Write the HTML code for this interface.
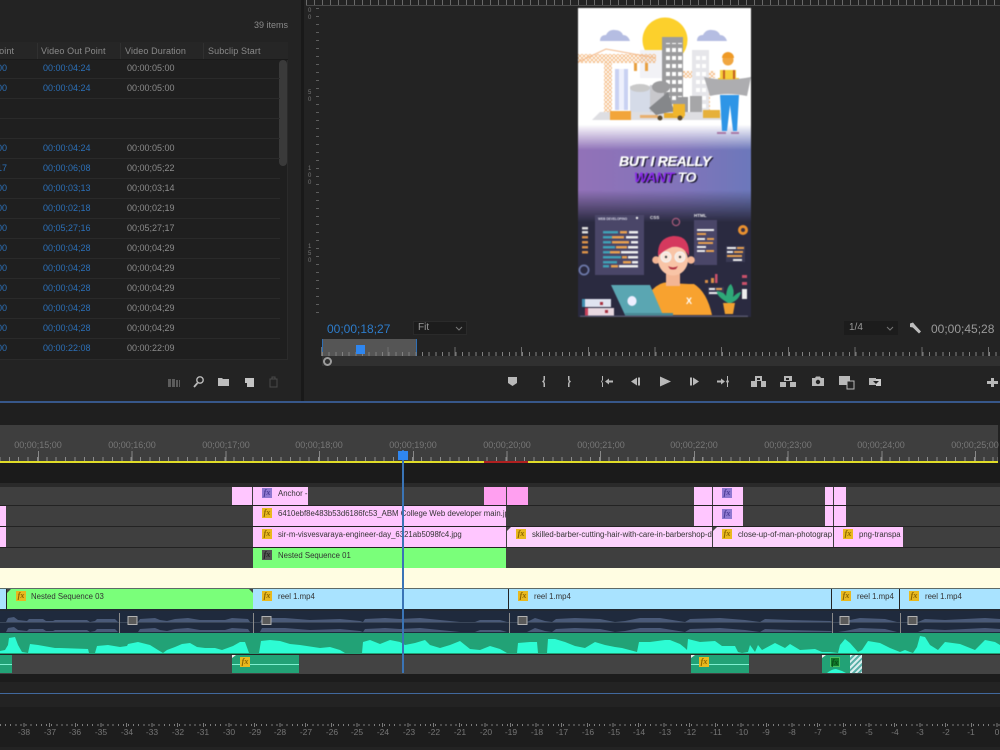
<!DOCTYPE html>
<html><head><meta charset="utf-8"><style>
html,body{margin:0;padding:0;background:#232323}
#r{position:relative;width:1000px;height:750px;overflow:hidden;background:#232323;font-family:"Liberation Sans",sans-serif;font-size:9px;filter:blur(.35px)}
#r div,#r span.a,#r svg{position:absolute}
.t{white-space:nowrap}
.rw{left:0;width:280px;height:20px;border-bottom:1px solid #2a2a2a;box-sizing:border-box}
.o{left:43px;color:#2c70b8;white-space:nowrap}
.d{left:127px;color:#8b8b8b;white-space:nowrap}
.i{left:-3px;color:#2c70b8;white-space:nowrap}
.h{color:#8a8a8a;top:46px;white-space:nowrap;letter-spacing:.12px}
.c{height:20px;color:#333;white-space:nowrap;overflow:hidden;line-height:15px}
.p{background:#ffc6ff}.q{background:#ff9ff0}.l{background:#fdd2fd}.g{background:#7aff7a}.b{background:#a9e3ff}
.f{width:10px;height:10px;top:2px;left:9px;background:#e9b91e;color:#8a6400;font:italic bold 8px/10px "Liberation Serif",serif;text-align:center}
.f.u{background:#8f78d0;color:#4c3c96}.f.k{background:#555;color:#222}
.n{left:25px;top:0;font-size:7.8px}
.rl{top:440px;width:60px;text-align:center;color:#777;font-size:9px}
.bl{top:727px;width:20px;text-align:center;color:#767676;font-size:8.5px}
.gn{background:#22a276;height:18px;top:655px}
</style></head><body><div id="r">

<!-- project panel -->
<div class="t" style="left:254px;top:20px;color:#8a8a8a">39 items</div>
<div style="left:0;top:42px;width:288px;height:318px;background:#1f1f1f;border:1px solid #2b2b2b;border-left:0;box-sizing:border-box"></div>
<div style="left:0;top:42px;width:288px;height:17px;background:#262626;border-bottom:1px solid #1a1a1a"></div>
<div style="left:37px;top:43px;width:1px;height:16px;background:#303030"></div>
<div style="left:120px;top:43px;width:1px;height:16px;background:#303030"></div>
<div style="left:203px;top:43px;width:1px;height:16px;background:#303030"></div>
<div class="h" style="left:-7px">Point</div>
<div class="h" style="left:41px">Video Out Point</div>
<div class="h" style="left:125px">Video Duration</div>
<div class="h" style="left:208px">Subclip Start</div>
<div style="left:279px;top:60px;width:8px;height:106px;background:#3a3a3a;border-radius:4px"></div>

<div class="rw" style="top:59px"></div><div class="rw" style="top:79px"></div><div class="rw" style="top:99px"></div><div class="rw" style="top:119px"></div><div class="rw" style="top:139px"></div><div class="rw" style="top:159px"></div><div class="rw" style="top:179px"></div><div class="rw" style="top:199px"></div><div class="rw" style="top:219px"></div><div class="rw" style="top:239px"></div><div class="rw" style="top:259px"></div><div class="rw" style="top:279px"></div><div class="rw" style="top:299px"></div><div class="rw" style="top:319px"></div>

<div class="i" style="top:63px">00</div><div class="o" style="top:63px">00:00:04:24</div><div class="d" style="top:63px">00:00:05:00</div>
<div class="i" style="top:83px">00</div><div class="o" style="top:83px">00:00:04:24</div><div class="d" style="top:83px">00:00:05:00</div>
<div class="i" style="top:143px">00</div><div class="o" style="top:143px">00:00:04:24</div><div class="d" style="top:143px">00:00:05:00</div>
<div class="i" style="top:163px">17</div><div class="o" style="top:163px">00;00;06;08</div><div class="d" style="top:163px">00;00;05;22</div>
<div class="i" style="top:183px">00</div><div class="o" style="top:183px">00;00;03;13</div><div class="d" style="top:183px">00;00;03;14</div>
<div class="i" style="top:203px">00</div><div class="o" style="top:203px">00;00;02;18</div><div class="d" style="top:203px">00;00;02;19</div>
<div class="i" style="top:223px">00</div><div class="o" style="top:223px">00;05;27;16</div><div class="d" style="top:223px">00;05;27;17</div>
<div class="i" style="top:243px">00</div><div class="o" style="top:243px">00;00;04;28</div><div class="d" style="top:243px">00;00;04;29</div>
<div class="i" style="top:263px">00</div><div class="o" style="top:263px">00;00;04;28</div><div class="d" style="top:263px">00;00;04;29</div>
<div class="i" style="top:283px">00</div><div class="o" style="top:283px">00;00;04;28</div><div class="d" style="top:283px">00;00;04;29</div>
<div class="i" style="top:303px">00</div><div class="o" style="top:303px">00;00;04;28</div><div class="d" style="top:303px">00;00;04;29</div>
<div class="i" style="top:323px">00</div><div class="o" style="top:323px">00;00;04;28</div><div class="d" style="top:323px">00;00;04;29</div>
<div style="left:0;top:340px;width:280px;height:12px;overflow:hidden"><div class="i" style="top:3px">00</div><div class="o" style="top:3px">00:00:22:08</div><div class="d" style="top:3px">00:00:22:09</div></div>

<svg style="left:160px;top:372px" width="125" height="20" viewBox="160 372 125 20">
<g fill="#5c5c5c"><rect x="168" y="379" width="3" height="8"/><rect x="172" y="379" width="3" height="8"/><rect x="176" y="380" width="2" height="7"/><rect x="179" y="380" width="1" height="7"/></g>
<circle cx="200" cy="380" r="3.2" fill="none" stroke="#bbb" stroke-width="1.4"/><path d="M197.5 383L194 387" stroke="#bbb" stroke-width="1.8"/>
<path d="M218 378h4l1 1h6v7h-11z" fill="#bdbdbd"/>
<path d="M245 378h9v9h-7v-4h-2z" fill="#c4c4c4"/><rect x="245" y="383" width="2" height="1" fill="#222"/>
<path d="M270 379h7v8h-7zM272 377h3v2h-3z" fill="none" stroke="#4a4a4a"/>
</svg>

<div style="left:301px;top:0;width:3px;height:402px;background:#191919"></div>
<div style="left:0;top:401px;width:1000px;height:2px;background:#37578a"></div>

<!-- monitor rulers -->
<div style="left:306px;top:0;width:694px;height:6px;background:repeating-linear-gradient(90deg,#6a6a6a 0 1px,transparent 1px 8px)"></div>
<div style="left:306px;top:5px;width:694px;height:1px;background:#4a4a4a"></div>
<div style="left:316px;top:8px;width:3px;height:310px;background:repeating-linear-gradient(180deg,#5e5e5e 0 1px,transparent 1px 8px)"></div>
<div style="left:308px;top:8px;width:6px;color:#777;font-size:6px;line-height:7px">0<br>0</div>
<div style="left:308px;top:90px;width:6px;color:#777;font-size:6px;line-height:7px">5<br>0</div>
<div style="left:308px;top:166px;width:6px;color:#777;font-size:6px;line-height:7px">1<br>0<br>0</div>
<div style="left:308px;top:244px;width:6px;color:#777;font-size:6px;line-height:7px">1<br>5<br>0</div>

<!-- video frame -->
<svg style="left:578px;top:8px;filter:blur(.6px)" width="173" height="309" viewBox="578 8 173 309">
<defs>
<linearGradient id="mid" x1="0" x2="1" y1="0" y2="0"><stop offset="0" stop-color="#9272b8"/><stop offset=".55" stop-color="#8374ba"/><stop offset="1" stop-color="#6c78bb"/></linearGradient>
<linearGradient id="fadeT" x1="0" x2="0" y1="0" y2="1"><stop offset="0" stop-color="#fff"/><stop offset=".25" stop-color="#fff"/><stop offset="1" stop-color="#fff" stop-opacity="0"/></linearGradient>
<linearGradient id="fadeB" x1="0" x2="0" y1="0" y2="1"><stop offset="0" stop-color="#2a2a40" stop-opacity="0"/><stop offset="1" stop-color="#2a2a40"/></linearGradient>
<pattern id="win" width="6" height="8" patternUnits="userSpaceOnUse"><rect width="4" height="4" fill="#fff"/></pattern>
<pattern id="lat" width="4" height="4" patternUnits="userSpaceOnUse"><path d="M0 0L4 4M4 0L0 4" stroke="#f2b070" stroke-width=".7"/></pattern>
</defs>
<rect x="578" y="8" width="173" height="309" fill="#2a2a40"/>
<rect x="578" y="110" width="173" height="112" fill="url(#mid)"/>
<rect x="578" y="8" width="173" height="110" fill="#fff"/>
<rect x="578" y="116" width="173" height="34" fill="url(#fadeT)"/>
<rect x="578" y="190" width="173" height="32" fill="url(#fadeB)"/>
<!-- sun and clouds -->
<circle cx="665" cy="40" r="22.5" fill="#fcd02c"/>
<rect x="640" y="50" width="22" height="28" fill="#f2f2f6"/>
<path d="M600 41q0-6 6-6 3-6 9-5 6 0 8 5 5 0 7 6z" fill="#b5bde2"/>
<path d="M697 41q0-6 6-6 3-6 9-5 6 0 8 5 5 0 7 6z" fill="#b5bde2"/>
<!-- crane -->
<rect x="578" y="54" width="78" height="9" fill="url(#lat)"/><path d="M578 62L606 49L656 58" fill="none" stroke="#f3b98a"/>
<rect x="604" y="62" width="8" height="50" fill="url(#lat)"/>
<rect x="634" y="63" width="3" height="8" fill="#e8a040"/><rect x="645" y="63" width="3" height="8" fill="#e8a040"/>
<rect x="670" y="71" width="45" height="7" fill="url(#lat)"/><rect x="704" y="78" width="6" height="38" fill="url(#lat)"/>
<!-- buildings -->
<rect x="615" y="69" width="13" height="41" fill="#c9d1f2"/><rect x="619" y="69" width="5" height="41" fill="#eef0fc"/>
<rect x="692" y="50" width="17" height="68" fill="#e6e6ea"/><rect x="694" y="54" width="14" height="62" fill="url(#win)"/>
<rect x="662" y="37" width="21" height="81" fill="#9b9b9d"/><rect x="664" y="43" width="18" height="73" fill="url(#win)"/>
<rect x="630" y="86" width="20" height="30" fill="#d5dbe8"/>
<rect x="650" y="85" width="14" height="30" fill="#c8c8cc"/>
<rect x="677" y="97" width="11" height="22" fill="#9a9a9c"/><rect x="690" y="96" width="12" height="23" fill="#a6a6a8"/>
<ellipse cx="640" cy="88" rx="10" ry="4" fill="#c9c9c9"/><ellipse cx="661" cy="87" rx="9" ry="6" fill="#9c9c9e"/>
<!-- ground -->
<path d="M600 112H720L724 120H592z" fill="#dedee2"/>
<rect x="610" y="111" width="21" height="9" fill="#f2a53a"/>
<rect x="640" y="115" width="18" height="3" fill="#e8b070"/>
<!-- truck -->
<path d="M649 108L668 92L674 111L656 115z" fill="#85878a"/>
<rect x="664" y="113" width="20" height="5" fill="#e8ac2c"/><rect x="673" y="104" width="12" height="12" fill="#f0b62c"/>
<circle cx="660" cy="118" r="2.5" fill="#5a4a30"/><circle cx="680" cy="118" r="2.5" fill="#5a4a30"/>
<rect x="703" y="110" width="17" height="8" fill="#e6b03a"/>
<!-- worker -->
<rect x="720" y="70" width="16" height="8" fill="#f6cf3a"/>
<circle cx="728" cy="60" r="5.5" fill="#f0a640"/><path d="M722 58a6 6 0 0 1 12 0z" fill="#ef9a26"/>
<path d="M718 78h21v9h-21z" fill="#f4c830"/>
<rect x="723" y="70" width="2" height="9" fill="#c46020"/><rect x="733" y="70" width="2" height="9" fill="#c46020"/>
<path d="M720 95h19l-2 36h-4l-3-26-3 26h-5z" fill="#2e95e6"/>
<path d="M717 132h9v2h-9zM731 132h8v2h-8z" fill="#a87aa8"/>
<path d="M704 77Q726 82 751 77L747 96Q727 92 710 96z" fill="#adadb0"/>
<!-- caption -->
<text x="665" y="166" text-anchor="middle" font-family="Liberation Sans" font-weight="bold" font-style="italic" font-size="14" letter-spacing="-.3" fill="#1d1a33" transform="translate(1.5 1.2)">BUT I REALLY</text>
<text x="665" y="166" text-anchor="middle" font-family="Liberation Sans" font-weight="bold" font-style="italic" font-size="14" letter-spacing="-.3" fill="#fff" stroke="#fff" stroke-width=".3">BUT I REALLY</text>
<text x="634" y="182" font-family="Liberation Sans" font-weight="bold" font-style="italic" font-size="14" letter-spacing="-.3" fill="#1d1a33" transform="translate(1.5 1.2)">WANT TO</text>
<text x="634" y="182" font-family="Liberation Sans" font-weight="bold" font-style="italic" font-size="14" letter-spacing="-.3" fill="#8a2be8">WANT <tspan fill="#fff">TO</tspan></text>
<!-- lower art -->
<rect x="595" y="215" width="49" height="60" fill="#4a4668"/>
<text x="598" y="220" font-family="Liberation Sans" font-size="3.2" font-weight="bold" fill="#d5d5e5">WEB DEVELOPING</text>
<circle cx="637" cy="218" r="1.2" fill="#eee"/>
<g>
<rect x="603" y="231" width="15" height="2.5" fill="#3f9fb5"/><rect x="620" y="231" width="7" height="2.5" fill="#e6a050"/><rect x="629" y="231" width="9" height="2.5" fill="#eee"/>
<rect x="603" y="236" width="9" height="2.5" fill="#3f9fb5"/><rect x="612" y="236" width="12" height="2.5" fill="#e6a050"/><rect x="626" y="236" width="12" height="2.5" fill="#eee"/>
<rect x="603" y="241" width="8" height="2.5" fill="#3f9fb5"/><rect x="612" y="241" width="17" height="2.5" fill="#e6a050"/><rect x="631" y="241" width="7" height="2.5" fill="#eee"/>
<rect x="603" y="246" width="12" height="2.5" fill="#3f9fb5"/><rect x="616" y="246" width="11" height="2.5" fill="#e6a050"/><rect x="628" y="246" width="10" height="2.5" fill="#eee"/>
<rect x="603" y="251" width="7" height="2.5" fill="#3f9fb5"/><rect x="610" y="251" width="10" height="2.5" fill="#e6a050"/><rect x="621" y="251" width="17" height="2.5" fill="#eee"/>
<rect x="603" y="256" width="18" height="2.5" fill="#3f9fb5"/><rect x="622" y="256" width="5" height="2.5" fill="#e6a050"/><rect x="628" y="256" width="10" height="2.5" fill="#eee"/>
<rect x="603" y="261" width="14" height="2.5" fill="#3f9fb5"/><rect x="623" y="261" width="8" height="2.5" fill="#e6a050"/><rect x="632" y="261" width="6" height="2.5" fill="#eee"/>
<rect x="603" y="265" width="6" height="2.5" fill="#3f9fb5"/><rect x="611" y="265" width="7" height="2.5" fill="#e6a050"/><rect x="619" y="265" width="19" height="2.5" fill="#eee"/>
</g>
<text x="650" y="219" font-family="Liberation Sans" font-size="4.5" font-weight="bold" fill="#eee">CSS</text>
<text x="694" y="217" font-family="Liberation Sans" font-size="4.5" font-weight="bold" fill="#eee">HTML</text>
<circle cx="676" cy="222" r="3.6" fill="none" stroke="#a85a7a" stroke-width="1.2"/>
<rect x="694" y="220" width="23" height="45" fill="#4a4668"/>
<g fill="#eee"><rect x="697" y="229" width="17" height="2"/><rect x="697" y="238" width="8" height="2"/><rect x="697" y="246" width="9" height="2"/><rect x="697" y="250" width="8" height="2"/></g>
<g fill="#e6a050"><rect x="697" y="233" width="9" height="2"/><rect x="707" y="238" width="7" height="2"/><rect x="698" y="242" width="15" height="2"/><rect x="706" y="250" width="8" height="2"/></g>
<circle cx="743" cy="230" r="5" fill="#e89030"/><circle cx="743" cy="230" r="2" fill="#3a3040"/>
<rect x="726" y="246" width="19" height="16" fill="#3a3a55"/>
<g fill="#eee"><rect x="727" y="247" width="9" height="2"/><rect x="727" y="251" width="6" height="2"/><rect x="733" y="259" width="9" height="2"/></g>
<g fill="#e6a050"><rect x="737" y="247" width="7" height="2"/><rect x="734" y="251" width="9" height="2"/><rect x="727" y="255" width="15" height="2"/></g>
<circle cx="584" cy="270" r="4.6" fill="none" stroke="#6c78a8" stroke-width="1.8"/>
<g fill="#ddd"><rect x="582" y="227" width="6" height="2.5"/><rect x="582" y="231" width="6" height="2.5"/></g>
<g fill="#d89048"><rect x="582" y="236" width="6" height="2.5"/><rect x="582" y="241" width="6" height="2.5"/><rect x="582" y="246" width="6" height="2.5"/><rect x="582" y="251" width="6" height="2.5"/></g>
<rect x="711" y="278" width="3" height="5" fill="#d89048"/><rect x="715" y="274" width="2.5" height="9" fill="#c9506a"/><rect x="705" y="280" width="3" height="3" fill="#d89048"/>
<g fill="#c9506a"><rect x="742" y="275" width="5" height="3"/><rect x="742" y="282" width="5" height="3"/></g>
<rect x="742" y="289" width="5" height="10" fill="#eee"/>
<rect x="708" y="287" width="16" height="8" fill="#3a3a55"/><rect x="709" y="288" width="6" height="2" fill="#eee"/><rect x="716" y="288" width="6" height="2" fill="#e6a050"/><rect x="709" y="292" width="10" height="2" fill="#eee"/>
<!-- person -->
<path d="M652 290Q662 280 672 283Q684 284 694 284Q707 292 712 315H660z" fill="#f8a22f"/>
<rect x="666" y="270" width="14" height="16" fill="#f3b594"/>
<circle cx="656" cy="260" r="3.8" fill="#f3b594"/><circle cx="691" cy="260" r="3.8" fill="#f3b594"/>
<ellipse cx="673" cy="260" rx="15" ry="15.5" fill="#f8c4a6"/>
<path d="M658 256Q657 238 673 236Q690 235 689 256Q683 245 672 247Q664 250 658 256z" fill="#d5395e"/>
<circle cx="666" cy="257" r="5" fill="#fbe7da" stroke="#f1f1f1" stroke-width="1.2"/><circle cx="680" cy="257" r="5" fill="#fbe7da" stroke="#f1f1f1" stroke-width="1.2"/>
<circle cx="666" cy="257" r="1.2" fill="#444"/><circle cx="680" cy="257" r="1.2" fill="#444"/>
<path d="M668 266q5 3 10 0l-2 3q-3 1-6 0z" fill="#b03040"/>
<text x="686" y="304" font-family="Liberation Sans" font-size="9" font-weight="bold" fill="#fff">X</text>
<path d="M611 285H650L663 315H625z" fill="#5aa6b2"/><rect x="625" y="313" width="48" height="2.5" fill="#4a8a96"/>
<ellipse cx="632" cy="301" rx="4.6" ry="5" fill="#eef"/>
<rect x="582" y="299" width="29" height="8" fill="#dfe3f0"/><rect x="582" y="299" width="3" height="8" fill="#3f8fb0"/>
<rect x="585" y="308" width="29" height="8" fill="#e8d8e0"/><rect x="585" y="308" width="3" height="8" fill="#c9405a"/>
<rect x="600" y="302" width="3" height="3" fill="#a83040"/><rect x="605" y="310" width="3" height="3" fill="#a83040"/>
<path d="M728 303Q716 296 717 291Q724 292 726 296Q727 286 731 284Q735 290 733 297Q738 292 741 292Q739 300 731 303z" fill="#2ea878"/>
<path d="M723 303H735L733 314H725z" fill="#f0a030"/>
<rect x="580" y="315.5" width="168" height="1.5" fill="#54546c"/>
</svg>

<!-- monitor controls -->
<div class="t" style="left:327px;top:322px;font-size:12px;color:#2d7ccb">00;00;18;27</div>
<div style="left:413px;top:321px;width:54px;height:14px;background:#1c1c1c;border:1px solid #2a2a2a;box-sizing:border-box"></div>
<div class="t" style="left:418px;top:322px;color:#999;font-size:10px">Fit</div>
<svg style="left:455px;top:326px" width="8" height="5"><path d="M1 1L4 4L7 1" fill="none" stroke="#777"/></svg>
<div style="left:844px;top:321px;width:54px;height:14px;background:#1c1c1c"></div>
<div class="t" style="left:849px;top:322px;color:#999;font-size:10px">1/4</div>
<svg style="left:886px;top:326px" width="8" height="5"><path d="M1 1L4 4L7 1" fill="none" stroke="#777"/></svg>
<svg style="left:908px;top:321px" width="14" height="14"><path d="M2 2.5L5 1.5L7 4L13 10.5L11 12.5L4.8 6.500L2 6z" fill="#bdbdbd"/></svg>
<div class="t" style="left:931px;top:322px;font-size:12px;color:#9a9a9a">00;00;45;28</div>

<div style="left:322px;top:339px;width:95px;height:17px;background:#555"></div>
<div style="left:322px;top:339px;width:1px;height:17px;background:#2f6fb5"></div>
<div style="left:416px;top:339px;width:1px;height:17px;background:#2f6fb5"></div>
<div style="left:322px;top:352px;width:678px;height:4px;background:repeating-linear-gradient(90deg,#808080 0 1px,transparent 1px 6.67px)"></div>
<div style="left:321px;top:347px;width:679px;height:9px;background:repeating-linear-gradient(90deg,#6e6e6e 0 1px,transparent 1px 66.7px)"></div>
<div style="left:356px;top:345px;width:9px;height:9px;background:#2f86ef"></div>
<div style="left:322px;top:356px;width:678px;height:10px;background:#303030"></div>
<div style="left:323px;top:357px;width:5px;height:5px;border:2px solid #9c9c9c;border-radius:50%;background:#303030"></div>

<svg style="left:500px;top:372px" width="500" height="20" viewBox="500 372 500 20">
<g fill="#b8b8b8" stroke="none">
<path d="M508 377H517V383L512.5 386L508 383z"/>
<path d="M545 376h-1.5v4l-1.5 1.5 1.5 1.5v4h1.5v-3.5l-.8-2 .8-2z"/>
<path d="M568 376h1.5v4l1.5 1.5-1.5 1.5v4H568v-3.5l.8-2-.8-2z"/>
<path d="M602 376h1v4l-1 1.5 1 1.5v4h-1v-4l-1-1.5 1-1.5zM605 381.500L609 378.500V380.500H613V382.500H609V384.500z"/>
<path d="M631 381.500L637 377.500V385.500zM638 377.500h2v8h-2z"/>
<path d="M660 376.500L671 381.500L660 386.500z"/>
<path d="M690 377.500h2v8h-2zM693 377.500L699 381.500L693 385.500z"/>
<path d="M717 380.500H721V378.500L725 381.500L721 384.500V382.500H717zM727 376h1v4l1 1.500-1 1.500v4h-1v-4l-1-1.500 1-1.500z"/>
<path d="M751 381h6v6h-6zM761 381h5v6h-5zM755 376h7v5h-7z"/>
<path d="M780 382h6v5h-6zM790 382h6v5h-6zM784 376h8v5h-8z"/>
<path d="M812 378h3l1-1.500h4l1 1.500h3v8h-12z"/>
<path d="M839 376h11v9h-11z"/>
<path d="M869 378h7v7h-7z"/>
<path d="M991 378h3v3h4v3h-4v3h-3v-3h-4v-3h4z"/>
</g>
<circle cx="818" cy="382" r="2.200" fill="#232323"/>
<rect x="847" y="381" width="7" height="8" fill="#232323" stroke="#b8b8b8"/>
<rect x="876" y="379" width="5" height="7" fill="#ccc"/><path d="M873 381l3 3 3-3" fill="#232323"/>
<rect x="757" y="378" width="3" height="2" fill="#232323"/><rect x="786" y="378" width="3" height="2" fill="#232323"/>
</svg>

<!-- timeline -->
<div style="left:0;top:403px;width:1000px;height:22px;background:#1f1f1f"></div>
<div style="left:0;top:425px;width:998px;height:36px;background:#3e3e3e"></div>
<div style="left:998px;top:425px;width:2px;height:38px;background:#222"></div>
<div class="rl" style="left:8px">00;00;15;00</div>
<div class="rl" style="left:102px">00;00;16;00</div>
<div class="rl" style="left:196px">00;00;17;00</div>
<div class="rl" style="left:289px">00;00;18;00</div>
<div class="rl" style="left:383px">00;00;19;00</div>
<div class="rl" style="left:477px">00;00;20;00</div>
<div class="rl" style="left:571px">00;00;21;00</div>
<div class="rl" style="left:664px">00;00;22;00</div>
<div class="rl" style="left:758px">00;00;23;00</div>
<div class="rl" style="left:851px">00;00;24;00</div>
<div class="rl" style="left:945px">00;00;25;00</div>
<div style="left:0;top:457px;width:998px;height:4px;background:repeating-linear-gradient(90deg,#8b8b8b 0 1px,transparent 1px 9.37px);background-position:-.5px 0"></div>
<div style="left:38px;top:451px;width:960px;height:10px;background:repeating-linear-gradient(90deg,#888 0 1px,transparent 1px 93.7px)"></div>
<div style="left:0;top:461px;width:998px;height:2px;background:#e0dc28"></div>
<div style="left:484px;top:461px;width:44px;height:2px;background:#b02020"></div>
<div style="left:0;top:463px;width:1000px;height:20px;background:#1b1b1b"></div>
<div style="left:0;top:483px;width:1000px;height:4px;background:#2a2a2a"></div>

<div style="left:0;top:487px;width:1000px;height:81px;background:#3f3f3f"></div>
<div style="left:0;top:505px;width:1000px;height:1px;background:#232323"></div>
<div style="left:0;top:526px;width:1000px;height:1px;background:#232323"></div>
<div style="left:0;top:547px;width:1000px;height:1px;background:#232323"></div>

<!-- row 1 -->
<div class="c p" style="left:232px;top:487px;width:20px;height:18px"></div>
<div class="c p" style="left:253px;top:487px;width:55px;height:18px"><div class="f u" style="top:1px">fx</div><div class="n t" style="top:-1px">Anchor -</div></div>
<div class="c q" style="left:484px;top:487px;width:22px;height:18px"></div>
<div class="c q" style="left:507px;top:487px;width:21px;height:18px"></div>
<div class="c p" style="left:694px;top:487px;width:18px;height:18px"></div>
<div class="c p" style="left:713px;top:487px;width:30px;height:18px"></div>
<div class="f u" style="left:722px;top:488px">fx</div>
<div class="c p" style="left:825px;top:487px;width:8px;height:18px"></div>
<div class="c p" style="left:834px;top:487px;width:12px;height:18px"></div>
<!-- row 2 -->
<div class="c p" style="left:0;top:506px;width:6px"></div>
<div class="c p" style="left:253px;top:506px;width:253px"><div class="f">fx</div><div class="n">6410ebf8e483b53d6186fc53_ABM College Web developer main.jp</div></div>
<div class="c p" style="left:694px;top:506px;width:18px"></div>
<div class="c p" style="left:713px;top:506px;width:30px"><div class="f u" style="top:3px">fx</div></div>
<div class="c p" style="left:825px;top:506px;width:8px"></div>
<div class="c p" style="left:834px;top:506px;width:12px"></div>
<!-- row 3 -->
<div class="c p" style="left:0;top:527px;width:6px"></div>
<div class="c p" style="left:253px;top:527px;width:253px"><div class="f">fx</div><div class="n">sir-m-visvesvaraya-engineer-day_6321ab5098fc4.jpg</div></div>
<div class="c l" style="left:507px;top:527px;width:205px"><div class="f">fx</div><div class="n">skilled-barber-cutting-hair-with-care-in-barbershop-du</div></div>
<div class="c l" style="left:713px;top:527px;width:120px"><div class="f">fx</div><div class="n">close-up-of-man-photograp</div></div>
<div class="c p" style="left:834px;top:527px;width:69px"><div class="f">fx</div><div class="n">png-transpa</div></div>
<svg style="left:507px;top:527px" width="5" height="5"><path d="M0 4L4 0H0z" fill="#444"/></svg>
<svg style="left:713px;top:527px" width="5" height="5"><path d="M0 4L4 0H0z" fill="#444"/></svg>
<!-- row 4 -->
<div class="c g" style="left:253px;top:548px;width:253px"><div class="f k">fx</div><div class="n">Nested Sequence 01</div></div>

<div style="left:0;top:568px;width:1000px;height:21px;background:#fffde2"></div>
<div style="left:0;top:588px;width:1000px;height:1px;background:#5e6a66"></div>
<div style="left:0;top:609px;width:1000px;height:24px;background:#222933"></div>
<!-- V1 -->
<div class="c b" style="left:0;top:589px;width:6px"></div>
<div class="c g" style="left:7px;top:589px;width:246px"><div class="f" style="left:9px">fx</div><div class="n" style="left:24px">Nested Sequence 03</div></div>
<div class="c b" style="left:253px;top:589px;width:255px"><div class="f">fx</div><div class="n">reel 1.mp4</div></div>
<div class="c b" style="left:509px;top:589px;width:322px"><div class="f">fx</div><div class="n">reel 1.mp4</div></div>
<div class="c b" style="left:832px;top:589px;width:67px"><div class="f">fx</div><div class="n">reel 1.mp4</div></div>
<div class="c b" style="left:900px;top:589px;width:100px"><div class="f">fx</div><div class="n">reel 1.mp4</div></div>
<svg style="left:7px;top:589px" width="5" height="5"><path d="M0 4L4 0H0z" fill="#444"/></svg>
<svg style="left:248px;top:589px" width="5" height="5"><path d="M5 4L1 0H5z" fill="#444"/></svg>

<!-- audio 1 -->
<svg style="left:0;top:611px" width="1000" height="23" viewBox="0 611 1000 23">
<rect x="0" y="611" width="1000" height="23" fill="#1f2a3d"/>
<defs><path id="w" d="M0 622L6 622L8 618L14 617L18 620L27 621L29 619L43 619L46 621L53 621L55 620L87 620L90 622L95 621L97 619L115 619L118 622L138 622L140 619L155 618L160 620L167 621L175 619L188 618L200 620L225 620L232 618L248 619L250 622L260 622L262 618L285 618L310 620L340 619L360 621L363 622L365 619L385 618L400 619L420 618L440 620L450 621L460 622L475 622L480 620L500 620L507 622L527 622L535 618L545 621L552 622L556 619L575 618L600 619L615 622L625 621L640 618L660 618L685 622L690 619L720 618L745 620L760 622L765 619L790 620L830 621L833 622L838 622L845 621L860 618L885 619L897 622L918 622L925 619L945 620L965 619L985 618L1000 619L1000 622Z"/></defs>
<use href="#w" fill="#4a5a78"/>
<use href="#w" y="10" fill="#4a5a78"/>
<rect x="0" y="622" width="1000" height="1" fill="#3a4658"/>
<g fill="#8a8a8a"><rect x="119" y="613" width="1" height="20"/><rect x="253" y="613" width="1" height="20"/><rect x="509" y="613" width="1" height="20"/><rect x="832" y="613" width="1" height="20"/><rect x="900" y="613" width="1" height="20"/></g>
<g fill="#5a5a5a" stroke="#b2b2b2"><rect x="128" y="616.500" width="9" height="8"/><rect x="262" y="616.500" width="9" height="8"/><rect x="518" y="616.500" width="9" height="8"/><rect x="840" y="616.500" width="9" height="8"/><rect x="908" y="616.500" width="9" height="8"/></g>
</svg>

<!-- audio 2 -->
<svg style="left:0;top:633px" width="1000" height="22" viewBox="0 633 1000 22">
<rect x="0" y="633" width="1000" height="21" fill="#22a276"/>
<polygon fill="#2dfcd4" points="0,653 0,651 5,650 8,645 9,638 15,637 18,645 22,652 28,653 30,644 38,645 55,648 60,648 88,649 89,653 95,653 97,646 108,645 120,647 127,646 128,644 138,642 150,645 158,650 163,653 167,650 175,647 182,644 190,643 197,647 205,648 215,648 222,650 233,646 240,642 245,642 249,653 259,653 261,641 270,640 280,641 290,644 300,645 320,648 330,647 340,650 345,653 362,653 363,642 370,640 380,644 390,640 400,642 405,645 415,643 425,640 430,645 440,648 450,645 460,641 465,645 470,649 480,650 490,646 500,649 507,653 517,653 518,643 530,642 537,642 538,653 547,653 548,639 555,639 565,642 575,646 585,648 595,642 605,645 615,647 622,648 637,652 639,642 650,642 665,640 670,640 680,644 685,648 687,650 688,639 700,642 715,641 722,646 735,646 738,652 742,653 748,652 750,645 755,652 758,645 762,650 775,643 785,648 790,644 800,650 815,649 822,652 830,652 838,653 840,645 845,639 850,643 858,652 862,650 868,641 880,643 890,648 900,652 905,650 910,652 913,653 917,647 920,636 925,637 930,645 938,650 945,642 960,644 975,650 985,640 995,642 1000,645 1000,653"/>
</svg>

<!-- audio 3 -->
<div style="left:0;top:655px;width:1000px;height:19px;background:#434343"></div>
<div class="gn" style="left:0;width:12px"></div>
<div class="gn" style="left:232px;width:67px"></div>
<div class="gn" style="left:691px;width:58px"></div>
<div class="gn" style="left:822px;width:28px"></div>
<div style="left:850px;top:655px;width:12px;height:18px;background:repeating-linear-gradient(135deg,#d9eeee 0 2px,#5ab0a8 2px 4px)"></div>
<div style="left:0;top:664px;width:12px;height:1px;background:#7ff0d0"></div>
<div style="left:232px;top:664px;width:67px;height:1px;background:#7ff0d0"></div>
<div style="left:691px;top:664px;width:58px;height:1px;background:#7ff0d0"></div>
<div class="f" style="left:240px;top:657px">fx</div>
<div class="f" style="left:699px;top:657px">fx</div>
<div class="f" style="left:830px;top:657px;background:#0f7a2a;color:#0a4a18;border:1px solid #49c060;box-sizing:border-box">fx</div>
<svg style="left:822px;top:666px" width="28" height="7"><path d="M5 7Q10 3 14 3L20 5L24 7z" fill="#2dfcd4"/></svg>
<svg style="left:232px;top:655px" width="5" height="4"><path d="M0 0H4L0 3z" fill="#eee"/></svg>
<svg style="left:691px;top:655px" width="5" height="4"><path d="M0 0H4L0 3z" fill="#eee"/></svg>
<svg style="left:822px;top:655px" width="5" height="4"><path d="M0 0H4L0 3z" fill="#eee"/></svg>

<div style="left:0;top:674px;width:1000px;height:8px;background:#1c1c1c"></div>
<div style="left:0;top:682px;width:1000px;height:11px;background:#232323"></div>
<div style="left:0;top:693px;width:1000px;height:1px;background:#41699e"></div>
<div style="left:0;top:694px;width:1000px;height:13px;background:#232323"></div>
<div style="left:0;top:707px;width:1000px;height:40px;background:#1d1d1d"></div>
<div style="left:0;top:747px;width:1000px;height:3px;background:#232323"></div>

<!-- playhead -->
<div style="left:402px;top:450px;width:2px;height:223px;background:#3a74b6"></div>
<div style="left:398px;top:451px;width:10px;height:9px;background:#2f86ef"></div>

<!-- bottom ruler -->
<div style="left:0;top:724px;width:1000px;height:2px;background:repeating-linear-gradient(90deg,#7a7a7a 0 1px,transparent 1px 5.12px)"></div>
<div style="left:-2px;top:723px;width:1002px;height:4px;background:repeating-linear-gradient(90deg,#7a7a7a 0 1px,transparent 1px 25.6px)"></div>
<div class="bl" style="left:14px">-38</div><div class="bl" style="left:40px">-37</div><div class="bl" style="left:65px">-36</div><div class="bl" style="left:91px">-35</div><div class="bl" style="left:117px">-34</div><div class="bl" style="left:142px">-33</div><div class="bl" style="left:168px">-32</div><div class="bl" style="left:193px">-31</div><div class="bl" style="left:219px">-30</div><div class="bl" style="left:245px">-29</div><div class="bl" style="left:270px">-28</div><div class="bl" style="left:296px">-27</div><div class="bl" style="left:322px">-26</div><div class="bl" style="left:347px">-25</div><div class="bl" style="left:373px">-24</div><div class="bl" style="left:399px">-23</div><div class="bl" style="left:424px">-22</div><div class="bl" style="left:450px">-21</div><div class="bl" style="left:476px">-20</div><div class="bl" style="left:501px">-19</div><div class="bl" style="left:527px">-18</div><div class="bl" style="left:552px">-17</div><div class="bl" style="left:578px">-16</div><div class="bl" style="left:604px">-15</div><div class="bl" style="left:629px">-14</div><div class="bl" style="left:655px">-13</div><div class="bl" style="left:680px">-12</div><div class="bl" style="left:706px">-11</div><div class="bl" style="left:732px">-10</div><div class="bl" style="left:756px">-9</div><div class="bl" style="left:782px">-8</div><div class="bl" style="left:808px">-7</div><div class="bl" style="left:833px">-6</div><div class="bl" style="left:859px">-5</div><div class="bl" style="left:885px">-4</div><div class="bl" style="left:910px">-3</div><div class="bl" style="left:936px">-2</div><div class="bl" style="left:961px">-1</div><div class="bl" style="left:987px">0</div>

</div></body></html>
